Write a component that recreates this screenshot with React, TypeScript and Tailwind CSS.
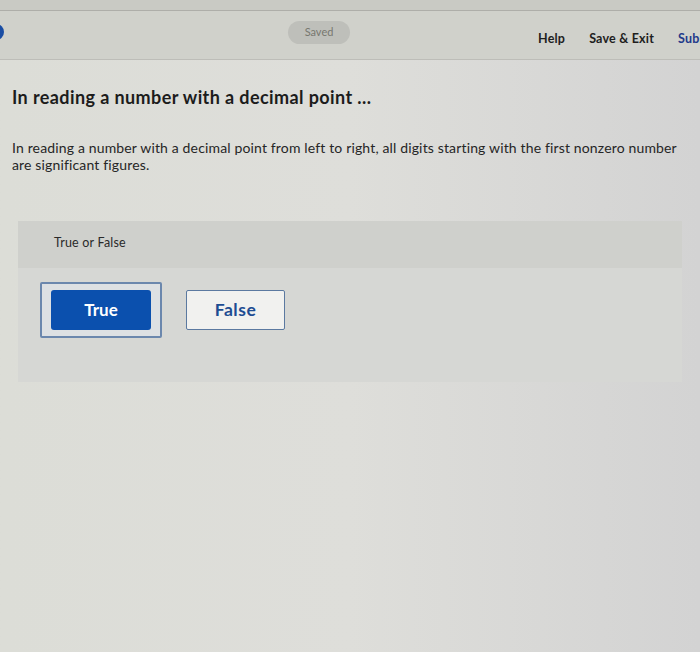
const FONT = { fontFamily: 'Lato, "Open Sans", sans-serif' }

function TopBar() {
  return (
    <div className="relative overflow-hidden whitespace-nowrap">
      <div className="h-[11px] border-b border-[#aeaea9] bg-[#c9cac4]" />
      <div className="flex h-[49px] items-start border-b border-[#bdbdb8] bg-[#d0d1cb]">
        <span className="absolute left-[-12px] top-[24px] h-[16px] w-[16px] rounded-full bg-[#1a4da3]" />
        <div className="ml-[288px] mt-[10px] flex h-[23px] w-[62px] shrink-0 items-center justify-center rounded-full bg-[#bebfba] text-[11px] text-[#77776f]">
          Saved
        </div>
        <nav className="ml-[188px] mt-[19px] flex shrink-0 gap-[24px] text-[12.5px] font-bold tracking-[0.2px] text-[#1e1e1e]">
          <span>Help</span>
          <span>Save &amp; Exit</span>
          <span className="text-[#22398a]">Submit</span>
        </nav>
      </div>
    </div>
  )
}

function TrueFalse() {
  return (
    <section className="ml-[18px] mt-[48px] w-[664px] bg-[#d6d7d4]">
      <div className="flex h-[47px] items-center bg-[#cfd0cc] pl-[36px] pb-[2px] text-[12.5px] tracking-[0.2px] text-[#2a2a2a]">
        True or False
      </div>
      <div className="flex h-[114px] items-start gap-[24px] pl-[22px] pt-[14px]">
        <div className="rounded-[2px] border-2 border-[#6b87ad] bg-[#dde0e3] px-[9px] py-[6px]">
          <button className="h-[40px] w-[100px] rounded-[3px] bg-[#0b50ae] text-[17px] font-bold text-white">
            True
          </button>
        </div>
        <button className="mt-[8px] h-[40px] w-[99px] rounded-[2px] border border-[#5b79a0] bg-[#f1f1ef] text-[17.5px] font-bold tracking-[0.5px] text-[#1d4c92]">
          False
        </button>
      </div>
    </section>
  )
}

export default function App() {
  return (
    <div
      className="h-[652px] w-[700px] overflow-hidden bg-linear-to-r from-[#dcddd7] via-[#dededa] to-[#d3d3d3]"
      style={FONT}
    >
      <TopBar />
      <h1 className="ml-[12px] mt-[26px] text-[18px] font-bold leading-[22px] tracking-[0.4px] text-[#1c1c1c]">
        In reading a number with a decimal point ...
      </h1>
      <p className="ml-[12px] mr-[8px] mt-[31px] text-[14px] leading-[17px] tracking-[0.15px] text-[#262626]">
        In reading a number with a decimal point from left to right, all digits starting with the first nonzero number
        are significant figures.
      </p>
      <TrueFalse />
    </div>
  )
}
